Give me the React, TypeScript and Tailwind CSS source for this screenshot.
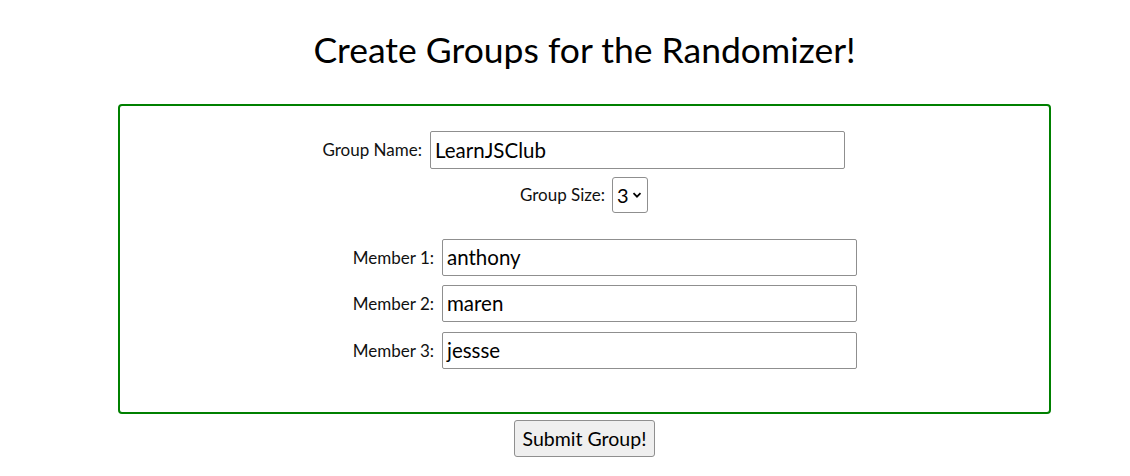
import React from "react";

const font = { fontFamily: "Lato, 'Noto Sans', sans-serif" };

function TextBox({ value, w = "w-[415px]", h = "h-[38px]" }: { value: string; w?: string; h?: string }) {
  return (
    <div
      className={`${w} ${h} border border-[#8f8f8f] rounded-[2px] bg-white flex items-center pl-[4px] text-[20.5px] text-black`}
    >
      {value}
    </div>
  );
}

function Label({ text, w }: { text: string; w: string }) {
  return (
    <div className={`${w} flex justify-end`}>
      <span className="whitespace-nowrap text-[17px] text-[#111]">{text}</span>
    </div>
  );
}

export default function App() {
  return (
    <div className="w-[1130px] h-[476px] bg-white text-black overflow-hidden" style={font}>
      <div className="pl-[39px] flex flex-col items-center">
        <h1 className="mt-[26px] h-[48px] leading-[48px] text-[35.5px] text-center text-black">
          Create Groups for the Randomizer!
        </h1>
        <div className="mt-[30px] w-[933px] h-[310px] border-2 border-[#008000] rounded-[4px] flex flex-col items-start pt-[25px]">
          <div className="flex items-center ml-[200px] h-[38px]">
            <Label text="Group Name:" w="w-[102px]" />
            <div className="ml-[8px]">
              <TextBox value="LearnJSClub" />
            </div>
          </div>
          <div className="flex items-center ml-[397px] mt-[8px] h-[36px]">
            <Label text="Group Size:" w="w-[88px]" />
            <div className="ml-[7px] w-[36px] h-[36px] border border-[#8f8f8f] rounded-[3px] bg-white flex items-center pl-[4px] gap-[3px] text-[20px]">
              <span>3</span>
              <svg width="10" height="10" viewBox="0 0 10 10">
                <path d="M1.5 3.2 L5 6.7 L8.5 3.2" fill="none" stroke="#000" strokeWidth="1.8" />
              </svg>
            </div>
          </div>
          <div className="flex items-center ml-[233px] mt-[26px] h-[37px]">
            <Label text="Member 1:" w="w-[81px]" />
            <div className="ml-[8px]">
              <TextBox value="anthony" h="h-[37px]" />
            </div>
          </div>
          <div className="flex items-center ml-[233px] mt-[9px] h-[37px]">
            <Label text="Member 2:" w="w-[81px]" />
            <div className="ml-[8px]">
              <TextBox value="maren" h="h-[37px]" />
            </div>
          </div>
          <div className="flex items-center ml-[233px] mt-[10px] h-[37px]">
            <Label text="Member 3:" w="w-[81px]" />
            <div className="ml-[8px]">
              <TextBox value="jessse" h="h-[37px]" />
            </div>
          </div>
        </div>
        <button className="mt-[6px] w-[141px] h-[37px] bg-[#efefef] border border-[#8f8f8f] rounded-[3px] text-[19.5px] text-black flex items-center justify-center">
          Submit Group!
        </button>
      </div>
    </div>
  );
}
